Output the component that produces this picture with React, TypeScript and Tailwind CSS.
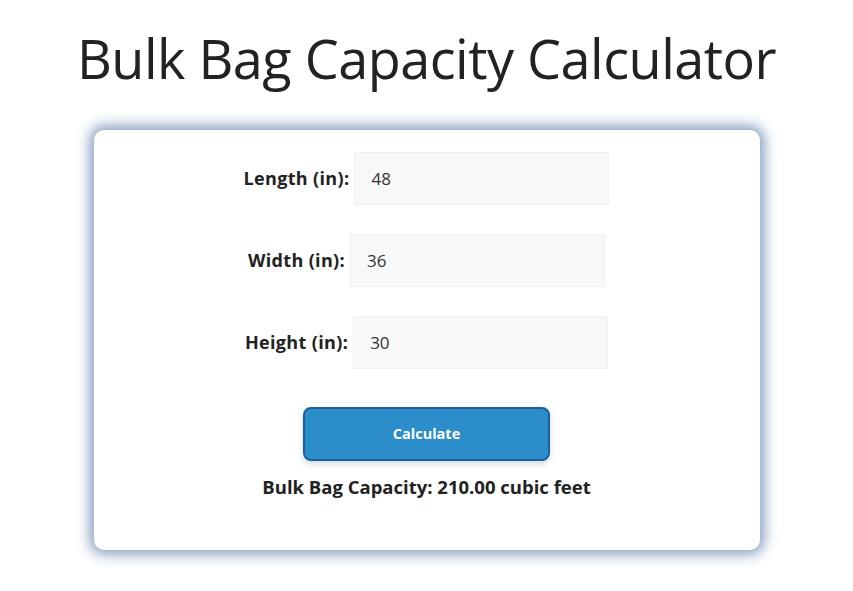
import { useState } from "react";

const rows = [
  { id: "length", label: "Length (in):" },
  { id: "width", label: "Width (in):" },
  { id: "height", label: "Height (in):" },
];

export default function App() {
  const [values, setValues] = useState<Record<string, string>>({
    length: "48",
    width: "36",
    height: "30",
  });

  return (
    <div
      className="min-h-screen bg-white text-[#222] pt-[18px]"
      style={{ fontFamily: '"Open Sans", "Noto Sans", sans-serif' }}
    >
      {/* Title */}
      <h1 className="text-center text-[54px] leading-[80px] font-normal tracking-[-0.5px]">
        Bulk Bag Capacity Calculator
      </h1>

      {/* Card */}
      <div className="mx-auto mt-[32px] w-[666px] h-[420px] rounded-[10px] bg-white shadow-[0_0_14px_4px_rgba(60,100,150,0.65)] pt-[22px]">
        <div className="flex flex-col items-center gap-[29px]">
          {rows.map((row) => (
            <div key={row.id} className="flex items-center gap-[5px]">
              <label htmlFor={row.id} className="text-[18px] font-bold tracking-[0.35px]">
                {row.label}
              </label>
              <input
                id={row.id}
                value={values[row.id]}
                onChange={(e) => setValues({ ...values, [row.id]: e.target.value })}
                className="w-[255px] h-[53px] bg-[#f7f8fa] border border-[#eef0f2] px-[16px] text-[17px] text-[#333] outline-none"
              />
            </div>
          ))}
        </div>

        <div className="flex flex-col items-center mt-[38px]">
          <button className="w-[247px] h-[54px] rounded-[8px] bg-[#2b8ecb] border-2 border-[#1a5f9f] text-white text-[14.5px] font-bold shadow-[0_3px_6px_rgba(0,0,0,0.15)]">
            Calculate
          </button>
          <p className="mt-[12px] text-[18.5px] font-bold">Bulk Bag Capacity: 210.00 cubic feet</p>
        </div>
      </div>
    </div>
  );
}
